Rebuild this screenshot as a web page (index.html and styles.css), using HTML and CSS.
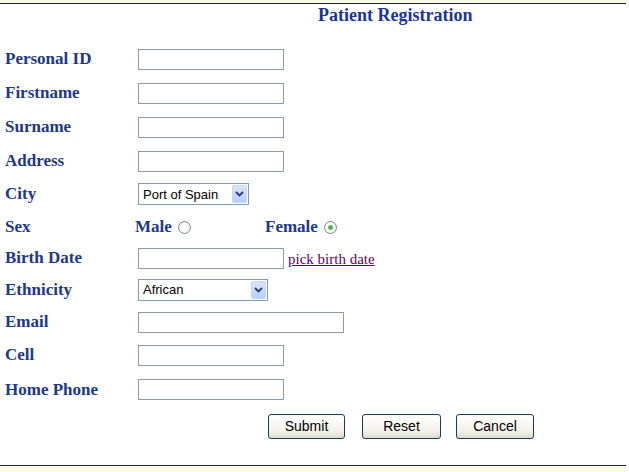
FILE: index.html
```html
<!DOCTYPE html>
<html>
<head>
<meta charset="utf-8">
<title>Patient Registration</title>
<link rel="stylesheet" href="styles.css">
</head>
<body>
<div class="page">
  <div class="band-top"></div>
  <main class="main">
    <h1 class="title">Patient Registration</h1>
    <form class="form">
      <label class="lbl">Personal ID</label>
      <div class="fld"><input class="txt" type="text"></div>

      <label class="lbl">Firstname</label>
      <div class="fld"><input class="txt" type="text"></div>

      <label class="lbl">Surname</label>
      <div class="fld"><input class="txt" type="text"></div>

      <label class="lbl">Address</label>
      <div class="fld"><input class="txt" type="text"></div>

      <label class="lbl">City</label>
      <div class="fld">
        <div class="sel sel-city">
          <select><option>Port of Spain</option></select>
          <span class="arrow"><svg width="9" height="6" viewBox="0 0 9 6"><path d="M1 1 L4.5 4.5 L8 1" fill="none" stroke="#1e3a8c" stroke-width="1.8"/></svg></span>
        </div>
      </div>

      <label class="lbl">Sex</label>
      <div class="fld sex">
        <span class="opt"><span class="opt-lbl">Male</span><input class="radio" type="radio" name="sex"></span>
        <span class="opt"><span class="opt-lbl">Female</span><input class="radio" type="radio" name="sex" checked></span>
      </div>

      <label class="lbl">Birth Date</label>
      <div class="fld"><input class="txt" type="text"><a class="pick" href="#">pick birth date</a></div>

      <label class="lbl">Ethnicity</label>
      <div class="fld">
        <div class="sel sel-eth">
          <select><option>African</option></select>
          <span class="arrow"><svg width="9" height="6" viewBox="0 0 9 6"><path d="M1 1 L4.5 4.5 L8 1" fill="none" stroke="#1e3a8c" stroke-width="1.8"/></svg></span>
        </div>
      </div>

      <label class="lbl">Email</label>
      <div class="fld"><input class="txt txt-wide" type="text"></div>

      <label class="lbl">Cell</label>
      <div class="fld"><input class="txt" type="text"></div>

      <label class="lbl">Home Phone</label>
      <div class="fld"><input class="txt" type="text"></div>

      <div class="buttons">
        <button type="button" class="btn btn-submit">Submit</button>
        <button type="button" class="btn btn-reset">Reset</button>
        <button type="button" class="btn btn-cancel">Cancel</button>
      </div>
    </form>
  </main>
  <div class="band-bottom"></div>
</div>
</body>
</html>
```

FILE: styles.css
```css
html, body {
  margin: 0;
  padding: 0;
  background: #ffffff;
}

.page {
  width: 626px;
  height: 472px;
  display: flex;
  flex-direction: column;
  font-family: "Liberation Serif", "Times New Roman", serif;
}

.band-top {
  height: 3px;
  background: #fbfbe2;
  border-bottom: 1px solid #1d1f4a;
}

.main {
  flex: 1;
  background: #ffffff;
}

.title {
  margin: 0;
  padding: 1px 0 0 318px;
  height: 37px;
  font-size: 18px;
  line-height: 20px;
  font-weight: bold;
  color: #1a3596;
}

.form {
  display: grid;
  grid-template-columns: 133px 1fr;
  grid-template-rows: 34px 34px 34px 34px 32px 33px 30px 33px 32px 34px 35px 38px;
  padding-left: 5px;
  margin: 0;
  align-items: center;
}

.lbl {
  font-size: 17px;
  font-weight: bold;
  color: #20378c;
  line-height: 18px;
  white-space: nowrap;
}

.fld {
  display: flex;
  align-items: center;
}

.txt {
  box-sizing: border-box;
  width: 146px;
  height: 21px;
  margin: 0;
  padding: 1px 3px;
  border: 1px solid #8c9aab;
  background: #fff;
  font-family: "Liberation Sans", Arial, sans-serif;
  font-size: 13px;
}

.txt-wide {
  width: 206px;
}

.pick {
  margin-left: 4px;
  margin-top: 3px;
  font-size: 15px;
  color: #660066;
  text-decoration: underline;
}

.sel {
  position: relative;
  box-sizing: border-box;
  height: 22px;
  border: 1px solid #7f9db9;
  background: #fff;
}

.sel-city { width: 111px; }
.sel-eth { width: 130px; }

.sel select {
  appearance: none;
  -webkit-appearance: none;
  border: none;
  outline: none;
  background: transparent;
  width: 100%;
  height: 100%;
  margin: 0;
  padding: 0 0 0 4px;
  font-family: "Liberation Sans", Arial, sans-serif;
  font-size: 13px;
  color: #000;
}

.sel .arrow {
  position: absolute;
  top: 1px;
  right: 1px;
  bottom: 1px;
  width: 15px;
  box-sizing: border-box;
  border: 1px solid #c8d6f6;
  border-radius: 2px;
  background: linear-gradient(#dbe6fd, #b9cdf8);
  display: flex;
  align-items: center;
  justify-content: center;
  pointer-events: none;
}

.sex {
  margin-left: -3px;
}

.opt {
  display: inline-flex;
  align-items: center;
  width: 130px;
}

.opt-lbl {
  font-size: 17px;
  font-weight: bold;
  color: #20378c;
}

.radio {
  appearance: none;
  -webkit-appearance: none;
  width: 13px;
  height: 13px;
  margin: 1px 0 0 6px;
  border: 1px solid #7b8a9b;
  border-radius: 50%;
  background: radial-gradient(circle, #ffffff 40%, #e6e6e0 100%);
}

.radio:checked {
  background: radial-gradient(circle, #3aa23a 0, #5cbf5c 2px, #ffffff 3px, #ffffff 45%, #e6e6e0 100%);
}

.buttons {
  grid-column: 1 / span 2;
  display: flex;
  align-items: center;
  padding-left: 263px;
  margin-top: 0;
}

.btn {
  box-sizing: border-box;
  height: 25px;
  margin: 0;
  padding: 0;
  border: 1px solid #1c3a5a;
  border-radius: 3px;
  background: linear-gradient(#ffffff, #f3f1ea 70%, #dedbcf);
  font-family: "Liberation Sans", Arial, sans-serif;
  font-size: 14px;
  color: #000;
}

.btn-submit { width: 77px; }
.btn-reset { width: 79px; margin-left: 17px; }
.btn-cancel { width: 78px; margin-left: 15px; }

.band-bottom {
  height: 6px;
  background: #fbfbe2;
  border-top: 1px solid #1d1f4a;
}
```
